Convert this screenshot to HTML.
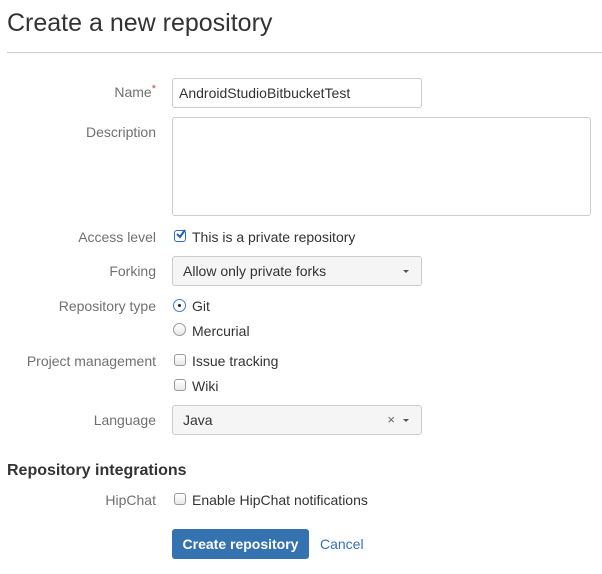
<!DOCTYPE html>
<html><head><style>
body{margin:0;width:602px;height:574px;background:#fff;font-family:"Liberation Sans",Arial,sans-serif;color:#333;position:relative;overflow:hidden}
.a{position:absolute}
h1{position:absolute;left:7px;top:9px;margin:0;font-size:25px;font-weight:normal;color:#333}
.hr{position:absolute;left:7px;right:0;top:52px;height:1px;background:#ccc}
.lbl{position:absolute;right:446px;font-size:14px;color:#707070;text-align:right;white-space:nowrap}
.inp{position:absolute;left:172px;border:1px solid #ccc;border-radius:3px;box-sizing:border-box;background:#fff;font-size:14px;color:#333}
.sel{background:#f5f5f5}
.t{position:absolute;left:192px;font-size:14px;color:#333;white-space:nowrap}
.cb{position:absolute;left:174px;width:12px;height:12px;border:1px solid #999;border-radius:3px;background:linear-gradient(#fff,#e8e8e8);box-sizing:border-box}
.rb{position:absolute;left:173px;width:13px;height:13px;border:1px solid #999;border-radius:50%;background:linear-gradient(#fff,#e8e8e8);box-sizing:border-box}
.car{position:absolute;right:12px;top:13px;width:0;height:0;border-left:3px solid transparent;border-right:3px solid transparent;border-top:3px solid #555}
</style></head><body>
<h1>Create a new repository</h1>
<div class="hr"></div>

<div class="lbl" style="top:84px">Name<span style="color:#d04437;font-size:11px;position:relative;top:-5px">*</span></div>
<div class="inp" style="top:78px;width:250px;height:30px;padding:6px 0 0 6px">AndroidStudioBitbucketTest</div>

<div class="lbl" style="top:124px">Description</div>
<div class="inp" style="top:117px;width:419px;height:99px"></div>

<div class="lbl" style="top:229px">Access level</div>
<div class="cb" style="top:230px;border-color:#2a6ac0;background:#fff"></div>
<svg class="a" style="left:175px;top:228px" width="12" height="12"><path d="M2 6 L5 9 L10 2" stroke="#1f5fb8" stroke-width="2" fill="none"/></svg>
<div class="t" style="top:229px">This is a private repository</div>

<div class="lbl" style="top:263px">Forking</div>
<div class="inp sel" style="top:256px;width:250px;height:30px;padding:6px 0 0 10px">Allow only private forks<div class="car"></div></div>

<div class="lbl" style="top:298px">Repository type</div>
<div class="rb" style="top:299px;border-color:#3b7ed6;background:#fff"></div>
<div class="a" style="left:178px;top:304px;width:3px;height:3px;border-radius:50%;background:#222"></div>
<div class="t" style="top:298px">Git</div>
<div class="rb" style="top:323px"></div>
<div class="t" style="top:323px">Mercurial</div>

<div class="lbl" style="top:353px">Project management</div>
<div class="cb" style="top:354px"></div>
<div class="t" style="top:353px">Issue tracking</div>
<div class="cb" style="top:379px"></div>
<div class="t" style="top:378px">Wiki</div>

<div class="lbl" style="top:412px">Language</div>
<div class="inp sel" style="top:405px;width:250px;height:30px;padding:6px 0 0 10px">Java<span class="a" style="right:26px;top:6px;color:#666;font-size:13px">×</span><div class="car"></div></div>

<div class="a" style="left:7px;top:462px;font-size:16px;font-weight:bold;color:#333">Repository integrations</div>
<div class="lbl" style="top:492px">HipChat</div>
<div class="cb" style="top:493px"></div>
<div class="t" style="top:492px">Enable HipChat notifications</div>

<div class="a" style="left:172px;top:529px;width:137px;height:30px;background:#3572b0;border-radius:3px;color:#fff;font-weight:bold;font-size:14px;text-align:center;line-height:30px">Create repository</div>
<div class="a" style="left:320px;top:536px;font-size:14px;color:#3572b0">Cancel</div>
</body></html>
